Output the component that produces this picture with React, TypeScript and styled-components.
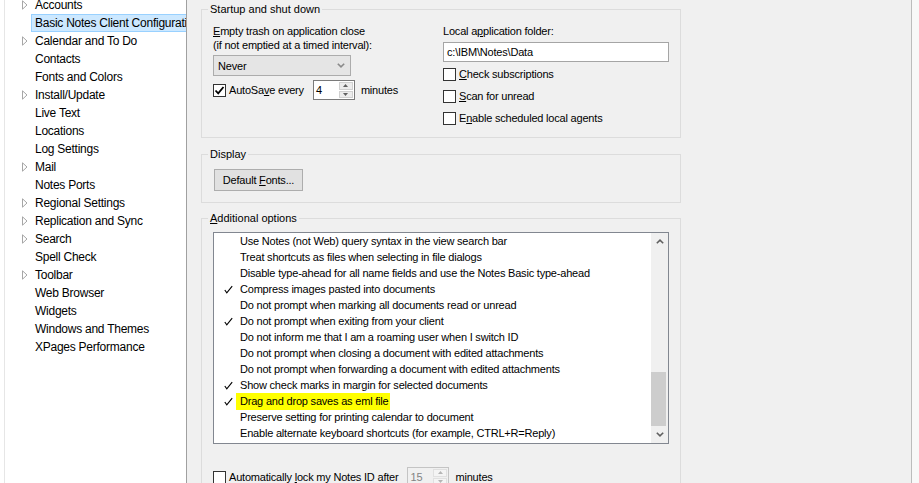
import React from "react";
import styled, { createGlobalStyle } from "styled-components";

const GlobalStyle = createGlobalStyle`
  html, body { margin: 0; padding: 0; background: #f0f0f0; }
  body { overflow: hidden; font-family: "Liberation Sans", Arial, sans-serif; color: #000; }
  #root { width: 919px; height: 483px; }
`;

const Window = styled.div`
  display: flex;
  width: 919px;
  height: 483px;
  overflow: hidden;
  background: #f0f0f0;
`;

/* ---------- Tree ---------- */
const TreePanel = styled.nav`
  flex: 0 0 187px;
  box-sizing: border-box;
  height: 100%;
  background: #fff;
  border-right: 1px solid #a0a0a0;
  padding-left: 4px;
  overflow: hidden;
`;

const TreeList = styled.ul`
  list-style: none;
  margin: -4px 0 0;
  padding: 0;
  height: calc(100% + 4px);
  border-left: 1px solid #e6e6e6;
`;

const TreeRow = styled.li`
  display: flex;
  height: 18px;
`;

const Expander = styled.span`
  flex: 0 0 26px;
  box-sizing: border-box;
  padding-left: 17px;
  display: flex;
  align-items: center;
`;

const TreeLabel = styled.span<{ $selected?: boolean }>`
  flex: 1 0 auto;
  box-sizing: border-box;
  display: flex;
  align-items: center;
  padding: 0 3px;
  font-size: 12px;
  letter-spacing: -0.25px;
  white-space: nowrap;
  border: 1px solid ${(p) => (p.$selected ? "#99d1ff" : "transparent")};
  background: ${(p) => (p.$selected ? "#cce8ff" : "transparent")};
`;

const ExpandIcon = () => (
  <svg width="6" height="10" viewBox="0 0 6 10">
    <path d="M0.5 0.8 L5 5 L0.5 9.2 Z" fill="#fff" stroke="#a6a6a6" strokeWidth="1" />
  </svg>
);

const treeItems: { label: string; kids?: boolean; selected?: boolean }[] = [
  { label: "Accounts", kids: true },
  { label: "Basic Notes Client Configuration", selected: true },
  { label: "Calendar and To Do", kids: true },
  { label: "Contacts" },
  { label: "Fonts and Colors" },
  { label: "Install/Update", kids: true },
  { label: "Live Text" },
  { label: "Locations" },
  { label: "Log Settings" },
  { label: "Mail", kids: true },
  { label: "Notes Ports" },
  { label: "Regional Settings", kids: true },
  { label: "Replication and Sync", kids: true },
  { label: "Search", kids: true },
  { label: "Spell Check" },
  { label: "Toolbar", kids: true },
  { label: "Web Browser" },
  { label: "Widgets" },
  { label: "Windows and Themes" },
  { label: "XPages Performance" },
];

/* ---------- Main ---------- */
const Main = styled.main`
  flex: 0 0 724px;
  box-sizing: border-box;
  height: 100%;
  padding-left: 14px;
  overflow: hidden;
  display: flex;
  flex-direction: column;
`;

const RightEdge = styled.div`
  flex: 0 0 8px;
  box-sizing: border-box;
  height: 100%;
  border-left: 1px solid #bcbcbc;
  background: #f8f8f8;
`;

const Group = styled.fieldset<{ $top: number }>`
  margin: ${(p) => p.$top}px 0 0;
  padding: 0;
  width: 480px;
  min-width: 0;
  box-sizing: border-box;
  border: 1px solid #dcdcdc;
  flex: 0 0 auto;
`;

const Legend = styled.legend`
  margin-left: 6px;
  padding: 0 2px;
  font-size: 11px;
  line-height: 14px;
  height: 14px;
`;

const GroupBody = styled.div<{ $pt: number; $pb: number }>`
  padding: ${(p) => p.$pt}px 11px ${(p) => p.$pb}px;
  font-size: 11px;
  letter-spacing: -0.2px;
`;

const TwoCols = styled.div`
  display: grid;
  grid-template-columns: 230px 226px;
`;

const Col = styled.div`
  display: flex;
  flex-direction: column;
  align-items: flex-start;
`;

const FieldLabel = styled.div`
  line-height: 14px;
  white-space: nowrap;
`;

const Select = styled.div`
  margin-top: 3px;
  width: 138px;
  height: 21px;
  box-sizing: border-box;
  border: 1px solid #acacac;
  background: #e5e5e5;
  display: flex;
  align-items: center;
  justify-content: space-between;
  padding: 0 5px 0 4px;
`;

const InlineRow = styled.div<{ $top: number }>`
  margin-top: ${(p) => p.$top}px;
  height: 20px;
  display: flex;
  align-items: center;
  white-space: nowrap;
`;

const CheckRow = styled.div`
  height: 22px;
  display: flex;
  align-items: center;
  white-space: nowrap;
`;

const Box = styled.span`
  flex: 0 0 13px;
  width: 13px;
  height: 13px;
  box-sizing: border-box;
  border: 1px solid #333;
  background: #fff;
  display: inline-flex;
  align-items: center;
  justify-content: center;
  margin-right: 3px;
`;

const Checkbox = ({ checked }: { checked?: boolean }) => (
  <Box>
    {checked && (
      <svg width="11" height="11" viewBox="0 0 11 11">
        <path d="M1.5 5.5 L4.2 8.3 L9.5 2" fill="none" stroke="#000" strokeWidth="1.8" />
      </svg>
    )}
  </Box>
);

const Gap = styled.span<{ $w: number }>`
  display: inline-block;
  width: ${(p) => p.$w}px;
`;

const Spinner = styled.div<{ $disabled?: boolean }>`
  width: 42px;
  height: 20px;
  box-sizing: border-box;
  border: 1px solid ${(p) => (p.$disabled ? "#c4c4c4" : "#7a7a7a")};
  background: ${(p) => (p.$disabled ? "#f0f0f0" : "#fff")};
  color: ${(p) => (p.$disabled ? "#838383" : "#000")};
  display: flex;
`;

const SpinField = styled.span`
  flex: 1;
  display: flex;
  align-items: center;
  padding-left: 2px;
`;

const SpinButtons = styled.span`
  flex: 0 0 14px;
  display: flex;
  flex-direction: column;
  padding: 1px 1px 1px 0;
  gap: 1px;
`;

const SpinButton = styled.span<{ $disabled?: boolean }>`
  flex: 1;
  display: flex;
  align-items: center;
  justify-content: center;
  background: ${(p) => (p.$disabled ? "#f4f4f4" : "#ececec")};
  border: 1px solid ${(p) => (p.$disabled ? "#e0e0e0" : "#d0d0d0")};
`;

const Tri = ({ up, color }: { up?: boolean; color: string }) => (
  <svg width="5" height="3" viewBox="0 0 5 3">
    <path d={up ? "M0 3 L2.5 0 L5 3 Z" : "M0 0 L2.5 3 L5 0 Z"} fill={color} />
  </svg>
);

const SpinBox = ({ value, disabled }: { value: string; disabled?: boolean }) => {
  const c = disabled ? "#b5b5b5" : "#606060";
  return (
    <Spinner $disabled={disabled}>
      <SpinField>{value}</SpinField>
      <SpinButtons>
        <SpinButton $disabled={disabled}>
          <Tri up color={c} />
        </SpinButton>
        <SpinButton $disabled={disabled}>
          <Tri color={c} />
        </SpinButton>
      </SpinButtons>
    </Spinner>
  );
};

const TextInput = styled.div`
  margin-top: 4px;
  margin-bottom: 1px;
  width: 226px;
  height: 20px;
  box-sizing: border-box;
  border: 1px solid #a5a5a5;
  background: #fff;
  display: flex;
  align-items: center;
  padding-left: 3px;
`;

const Button = styled.div`
  margin-left: 1px;
  width: 89px;
  height: 22px;
  box-sizing: border-box;
  border: 1px solid #adadad;
  background: #e1e1e1;
  display: flex;
  align-items: center;
  justify-content: center;
`;

const ListBox = styled.div`
  height: 212px;
  box-sizing: border-box;
  border: 1px solid #828790;
  background: #fff;
  display: flex;
`;

const Items = styled.ul`
  flex: 1;
  list-style: none;
  margin: 0;
  padding: 0;
  overflow: hidden;
`;

const Item = styled.li`
  height: 16px;
  display: flex;
  align-items: center;
  font-size: 11px;
  letter-spacing: -0.2px;
  white-space: nowrap;
`;

const CheckSlot = styled.span`
  flex: 0 0 26px;
  box-sizing: border-box;
  padding-left: 10px;
  display: flex;
  align-items: center;
`;

const Highlight = styled.span`
  background: #ffff00;
  margin-left: -4px;
  padding: 2px 1px 3px 4px;
`;

const Scrollbar = styled.div`
  flex: 0 0 17px;
  display: flex;
  flex-direction: column;
  background: #f0f0f0;
`;

const ScrollArrow = styled.div`
  flex: 0 0 17px;
  display: flex;
  align-items: center;
  justify-content: center;
`;

const ScrollTrack = styled.div`
  flex: 1;
  display: flex;
  flex-direction: column;
  justify-content: flex-end;
`;

const ScrollThumb = styled.div`
  height: 54px;
  margin-right: 2px;
  background: #cdcdcd;
`;

const Chevron = ({ up, color = "#606060" }: { up?: boolean; color?: string }) => (
  <svg width="8" height="5" viewBox="0 0 8 5">
    <path
      d={up ? "M0.8 4.3 L4 1.2 L7.2 4.3" : "M0.8 0.7 L4 3.8 L7.2 0.7"}
      fill="none"
      stroke={color}
      strokeWidth="1.6"
    />
  </svg>
);

const ListCheck = () => (
  <svg width="9" height="9" viewBox="0 0 9 9">
    <path d="M0.8 5 L2.8 7.8 L8.2 1.2" fill="none" stroke="#000" strokeWidth="1.1" />
  </svg>
);

const options: { text: string; checked?: boolean; mark?: boolean }[] = [
  { text: "Use Notes (not Web) query syntax in the view search bar" },
  { text: "Treat shortcuts as files when selecting in file dialogs" },
  { text: "Disable type-ahead for all name fields and use the Notes Basic type-ahead" },
  { text: "Compress images pasted into documents", checked: true },
  { text: "Do not prompt when marking all documents read or unread" },
  { text: "Do not prompt when exiting from your client", checked: true },
  { text: "Do not inform me that I am a roaming user when I switch ID" },
  { text: "Do not prompt when closing a document with edited attachments" },
  { text: "Do not prompt when forwarding a document with edited attachments" },
  { text: "Show check marks in margin for selected documents", checked: true },
  { text: "Drag and drop saves as eml file", checked: true, mark: true },
  { text: "Preserve setting for printing calendar to document" },
  { text: "Enable alternate keyboard shortcuts (for example, CTRL+R=Reply)" },
];

export default function App() {
  return (
    <>
      <GlobalStyle />
      <Window>
        <TreePanel>
          <TreeList>
            {treeItems.map((t) => (
              <TreeRow key={t.label}>
                <Expander>{t.kids && <ExpandIcon />}</Expander>
                <TreeLabel $selected={t.selected}>{t.label}</TreeLabel>
              </TreeRow>
            ))}
          </TreeList>
        </TreePanel>

        <Main>
          <Group $top={2}>
            <Legend>Startup and shut down</Legend>
            <GroupBody $pt={8} $pb={8}>
              <TwoCols>
                <Col>
                  <FieldLabel>
                    <u>E</u>mpty trash on application close
                    <br />
                    (if not emptied at a timed interval):
                  </FieldLabel>
                  <Select>
                    <span>Never</span>
                    <Chevron color="#8a8a8a" />
                  </Select>
                  <InlineRow $top={4}>
                    <Checkbox checked />
                    <span>
                      AutoSa<u>v</u>e every
                    </span>
                    <Gap $w={9} />
                    <SpinBox value="4" />
                    <Gap $w={6} />
                    <span>minutes</span>
                  </InlineRow>
                </Col>
                <Col>
                  <FieldLabel>
                    Local a<u>p</u>plication folder:
                  </FieldLabel>
                  <TextInput>c:\IBM\Notes\Data</TextInput>
                  <CheckRow>
                    <Checkbox />
                    <span>
                      <u>C</u>heck subscriptions
                    </span>
                  </CheckRow>
                  <CheckRow>
                    <Checkbox />
                    <span>
                      <u>S</u>can for unread
                    </span>
                  </CheckRow>
                  <CheckRow>
                    <Checkbox />
                    <span>
                      E<u>n</u>able scheduled local agents
                    </span>
                  </CheckRow>
                </Col>
              </TwoCols>
            </GroupBody>
          </Group>

          <Group $top={9}>
            <Legend>Display</Legend>
            <GroupBody $pt={8} $pb={11}>
              <Button>
                <span>
                  Default <u>F</u>onts...
                </span>
              </Button>
            </GroupBody>
          </Group>

          <Group $top={8}>
            <Legend>
              <u>A</u>dditional options
            </Legend>
            <GroupBody $pt={7} $pb={30}>
              <ListBox>
                <Items>
                  {options.map((o) => (
                    <Item key={o.text}>
                      <CheckSlot>{o.checked && <ListCheck />}</CheckSlot>
                      {o.mark ? <Highlight>{o.text}</Highlight> : <span>{o.text}</span>}
                    </Item>
                  ))}
                </Items>
                <Scrollbar>
                  <ScrollArrow>
                    <Chevron up />
                  </ScrollArrow>
                  <ScrollTrack>
                    <ScrollThumb />
                  </ScrollTrack>
                  <ScrollArrow>
                    <Chevron />
                  </ScrollArrow>
                </Scrollbar>
              </ListBox>
              <InlineRow $top={23}>
                <Checkbox />
                <span>
                  Automatically <u>l</u>ock my Notes ID after
                </span>
                <Gap $w={9} />
                <SpinBox value="15" disabled />
                <Gap $w={6} />
                <span>minutes</span>
              </InlineRow>
            </GroupBody>
          </Group>
        </Main>
        <RightEdge />
      </Window>
    </>
  );
}
